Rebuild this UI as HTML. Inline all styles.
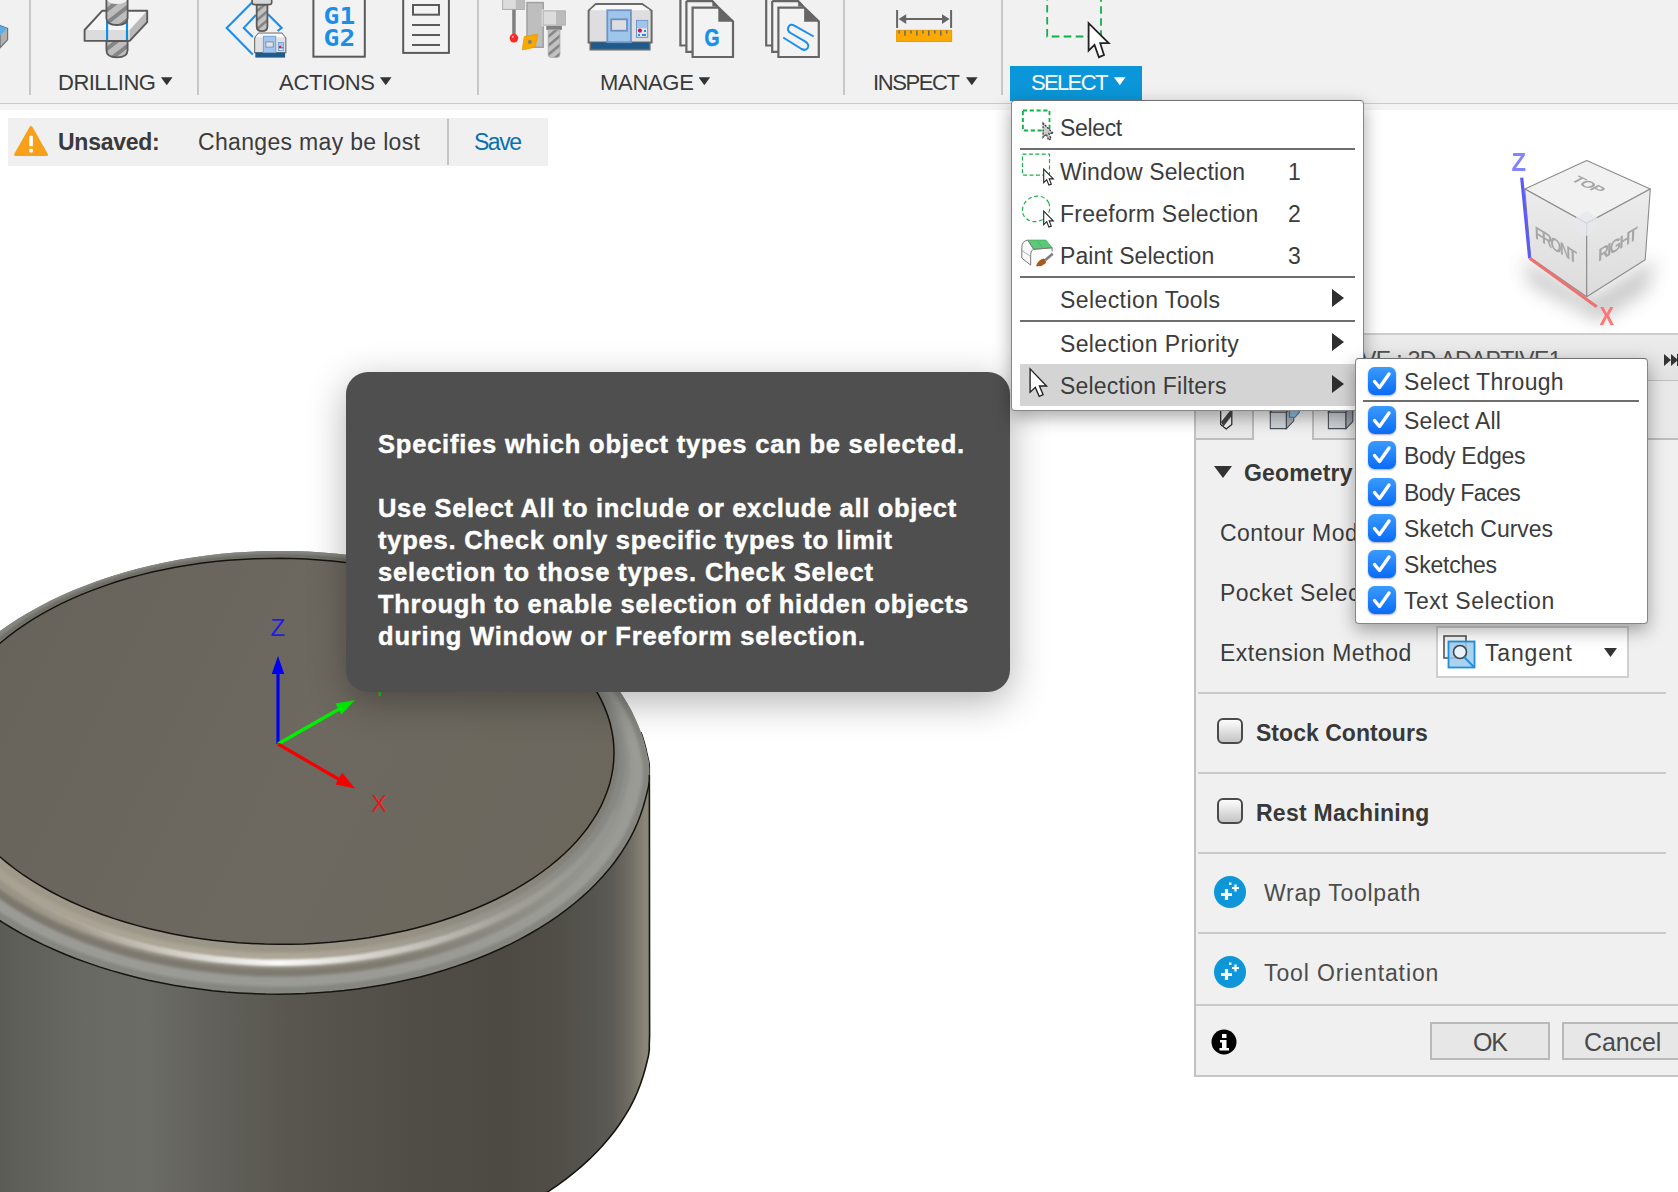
<!DOCTYPE html>
<html lang="en">
<head>
<meta charset="utf-8">
<title>Fusion 360 - Selection Filters</title>
<style>
html,body{margin:0;padding:0;}
body{width:1678px;height:1192px;overflow:hidden;background:#fff;position:relative;font-family:"Liberation Sans","DejaVu Sans",sans-serif;color:#3c3c3c;}
.abs{position:absolute;}
#canvas{left:0;top:0;width:1678px;height:1192px;}
/* toolbar */
#toolbar{left:0;top:0;width:1678px;height:103px;background:#f1f1f1;border-bottom:1px solid #c9c9c9;}
#tbshadow{left:0;top:104px;width:1678px;height:6px;background:#f3f3f3;}
.tsep{position:absolute;top:0;width:2px;height:95px;background:#c8c8c8;}
.tlabel{position:absolute;top:69.3px;height:28px;line-height:28px;font-size:22px;color:#3a3a3a;white-space:nowrap;}
.tlabel i{display:inline-block;width:11.6px;height:8px;background:#333;clip-path:polygon(0 0,100% 0,50% 100%);margin-left:5px;position:relative;top:-5px;}
#selbtn{left:1010px;top:66px;width:132px;height:35px;background:#0a96d8;}
/* unsaved bar */
#unsaved{left:8px;top:118px;width:540px;height:48px;background:#f0f0f0;}
#unsaved .sep{position:absolute;left:439px;top:1px;width:2px;height:46px;background:#c4c4c4;}
#unsaved span{position:absolute;top:0;line-height:48px;font-size:23px;white-space:nowrap;}
/* menus */
.menu{position:absolute;background:#fff;border:1.5px solid #868686;border-top-color:#707070;border-radius:4px;box-shadow:0 6px 18px rgba(0,0,0,.35);box-sizing:border-box;}
.mi{position:absolute;left:8px;right:8px;height:42px;line-height:42px;font-size:23px;color:#3c3c3c;white-space:nowrap;}
.mi span.t{position:absolute;left:40px;top:1px;}
.mi span.k{position:absolute;left:268px;top:1px;}
.mi .arr{position:absolute;right:11px;top:11px;width:0;height:0;border-top:9.5px solid transparent;border-bottom:9.5px solid transparent;border-left:12px solid #2e2e2e;}
.msep{position:absolute;left:8px;right:8px;height:2px;background:#6e6e6e;}
/* tooltip */
#tip{left:346px;top:372px;width:664px;height:320px;background:#4f4f4f;border-radius:22px;box-shadow:0 10px 38px rgba(0,0,0,.30);color:#fff;font-weight:bold;font-size:25.5px;line-height:32px;-webkit-text-stroke:0.45px #fff;}
#tip p{position:absolute;left:32px;margin:0;white-space:nowrap;}
/* panel */
#panel{left:1194px;top:333px;width:490px;height:744px;background:#f0f0f0;border-left:2px solid #c2c2c2;border-bottom:2px solid #c6c6c6;box-sizing:border-box;}
.prow{position:absolute;margin-top:1px;font-size:23px;color:#3c3c3c;white-space:nowrap;line-height:30px;}
.pline{position:absolute;left:4px;width:468px;height:2px;background:#c9c9c9;}
.cb{width:26px;height:26px;box-sizing:border-box;border:2px solid #4a4a4a;border-radius:6px;background:linear-gradient(#fdfdfd,#c4c4c4);}
.btn{background:#e7e7e7;border:2px solid #b9b9b9;box-sizing:border-box;}
.btn span{position:absolute;top:0;line-height:36px;font-size:25px;color:#4a4a4a;white-space:nowrap;}
.ck{position:absolute;left:12px;width:28px;height:28px;border-radius:6.5px;background:linear-gradient(#3a9bff,#0a6bf5);box-shadow:0 1px 2px rgba(0,0,80,.35);}
.ck svg{position:absolute;left:0;top:0;}
.st{position:absolute;left:48px;margin-top:1.2px;font-size:23px;line-height:30px;color:#3c3c3c;white-space:nowrap;}
</style>
<style id="fit">
#l1{letter-spacing:-0.505px}
#l2{letter-spacing:-0.292px}
#l3{letter-spacing:-0.302px}
#l4{letter-spacing:-1.409px}
#l5{letter-spacing:-1.653px}
#u1{letter-spacing:-0.260px}
#u2{letter-spacing:0.326px}
#u3{letter-spacing:-1.468px}
#t1{letter-spacing:0.791px}
#t2{letter-spacing:0.667px}
#t3{letter-spacing:0.772px}
#t4{letter-spacing:0.855px}
#t5{letter-spacing:0.726px}
#t6{letter-spacing:0.808px}
#mt1{letter-spacing:-0.334px}
#mt2{letter-spacing:0.141px}
#mt3{letter-spacing:0.239px}
#mt4{letter-spacing:0.059px}
#mt5{letter-spacing:0.414px}
#mt6{letter-spacing:0.367px}
#mt7{letter-spacing:0.186px}
#s1{letter-spacing:0.313px}
#s2{letter-spacing:0.262px}
#s3{letter-spacing:-0.288px}
#s4{letter-spacing:-0.511px}
#s5{letter-spacing:-0.053px}
#s6{letter-spacing:-0.215px}
#s7{letter-spacing:0.541px}
#p_geo{letter-spacing:0.150px}
#p_em{letter-spacing:0.476px}
#p_tan{letter-spacing:0.822px}
#p_sc{letter-spacing:0.034px}
#p_rm{letter-spacing:0.262px}
#p_wt{letter-spacing:0.730px}
#p_to{letter-spacing:0.884px}
#p_ok{letter-spacing:-1.283px}
#p_ca{letter-spacing:-0.096px}
#pt1{letter-spacing:-0.659px}
#p_cm,#p_ps{letter-spacing:0.476px}
#pt0{letter-spacing:-0.659px}
.mi span.k{letter-spacing:0}
</style>
</head>
<body>
<!-- 3D canvas -->
<svg id="canvas" class="abs" width="1678" height="1192" viewBox="0 0 1678 1192">
<!--CYL-->
<defs>
<linearGradient id="gw" gradientUnits="userSpaceOnUse" x1="0" y1="0" x2="650" y2="0">
<stop offset="0" stop-color="#5c5c57"/><stop offset=".128" stop-color="#696963"/><stop offset=".225" stop-color="#6c6c66"/><stop offset=".32" stop-color="#62615b"/><stop offset=".45" stop-color="#58564f"/><stop offset=".64" stop-color="#504d46"/><stop offset=".78" stop-color="#4d4a43"/><stop offset=".86" stop-color="#504e47"/><stop offset=".91" stop-color="#555550"/><stop offset=".94" stop-color="#5c5a54"/><stop offset=".966" stop-color="#6c6a62"/><stop offset=".993" stop-color="#8a8678"/><stop offset="1" stop-color="#8a8678"/>
</linearGradient>
<linearGradient id="gt" gradientUnits="userSpaceOnUse" x1="0" y1="600" x2="620" y2="900">
<stop offset="0" stop-color="#67635a"/><stop offset=".5" stop-color="#6e6960"/><stop offset="1" stop-color="#6b675d"/>
</linearGradient>
<linearGradient id="gh" gradientUnits="userSpaceOnUse" x1="0" y1="0" x2="650" y2="0">
<stop offset="0" stop-color="#fff" stop-opacity="0"/><stop offset=".12" stop-color="#fff" stop-opacity=".10"/><stop offset=".30" stop-color="#fff" stop-opacity=".6"/><stop offset=".43" stop-color="#fff" stop-opacity=".95"/><stop offset=".56" stop-color="#fff" stop-opacity=".6"/><stop offset=".78" stop-color="#fff" stop-opacity=".12"/><stop offset="1" stop-color="#fff" stop-opacity="0"/>
</linearGradient>
<linearGradient id="gf1" gradientUnits="userSpaceOnUse" x1="0" y1="0" x2="650" y2="0">
<stop offset="0" stop-color="#a8a293"/><stop offset=".45" stop-color="#aea797"/><stop offset=".8" stop-color="#92918a"/><stop offset="1" stop-color="#828480"/>
</linearGradient>
<linearGradient id="gb1" gradientUnits="userSpaceOnUse" x1="0" y1="0" x2="650" y2="0"><stop offset="0" stop-color="#9f998a"/><stop offset=".6" stop-color="#989284"/><stop offset=".85" stop-color="#858379"/><stop offset="1" stop-color="#7a7a72"/></linearGradient>
<linearGradient id="gb3" gradientUnits="userSpaceOnUse" x1="0" y1="0" x2="650" y2="0"><stop offset="0" stop-color="#999385"/><stop offset=".6" stop-color="#9a9486"/><stop offset=".85" stop-color="#94948c"/><stop offset="1" stop-color="#8c8e88"/></linearGradient>
<linearGradient id="gb4" gradientUnits="userSpaceOnUse" x1="0" y1="0" x2="650" y2="0"><stop offset="0" stop-color="#7c786e"/><stop offset=".6" stop-color="#7e7a70"/><stop offset=".85" stop-color="#90918b"/><stop offset="1" stop-color="#9a9c96"/></linearGradient>
<filter id="b2" x="-5%" y="-5%" width="110%" height="110%"><feGaussianBlur stdDeviation="1.6"/></filter>
<filter id="b1" x="-5%" y="-5%" width="110%" height="110%"><feGaussianBlur stdDeviation="0.9"/></filter>
<clipPath id="cf"><path d="M649.3,774.9 L649.3,781.5 L648.2,788.0 L646.4,794.6 L644.2,803.5 L641.4,812.5 L638.0,821.5 L634.1,830.3 L629.6,839.1 L624.5,847.7 L618.9,856.2 L612.8,864.5 L606.1,872.7 L598.9,880.7 L591.2,888.5 L583.0,896.1 L574.3,903.5 L565.2,910.6 L555.6,917.6 L545.5,924.3 L535.1,930.7 L524.2,936.9 L512.9,942.8 L501.3,948.4 L489.3,953.7 L477.0,958.8 L464.3,963.5 L451.4,967.9 L438.1,972.0 L424.6,975.7 L410.9,979.1 L397.0,982.2 L382.8,984.9 L368.5,987.3 L354.0,989.4 L339.4,991.0 L324.7,992.4 L309.9,993.3 L295.1,993.9 L280.2,994.2 L265.3,994.1 L250.4,993.6 L235.5,992.7 L220.7,991.5 L206.0,989.9 L191.4,988.0 L176.8,985.7 L162.5,983.1 L148.3,980.2 L134.2,976.8 L120.4,973.2 L106.9,969.2 L93.5,964.9 L80.5,960.3 L67.7,955.4 L55.3,950.1 L43.1,944.6 L31.4,938.8 L20.0,932.7 L9.0,926.4 L-1.7,919.8 L-11.8,912.9 L-21.6,905.8 L-30.9,898.5 L-39.8,890.9 L-48.1,883.2 L-56.0,875.3 L-63.4,867.1 L-70.2,858.9 L-76.6,850.4 L-82.4,841.9 L-87.6,833.1 L-92.3,824.3 L-96.5,815.4 L-100.1,806.4 L-103.1,797.3 L-105.5,788.2 L-107.2,779.3 L-105.4,775.4 L-103.1,771.5 L-100.3,767.6 L-96.9,763.8 L-93.1,760.0 L-88.7,756.2 L-86.6,747.5 L-84.0,738.5 L-80.9,729.6 L-77.3,720.7 L-73.1,712.0 L-68.3,703.4 L-63.0,694.8 L-57.2,686.5 L-50.8,678.3 L-44.0,670.2 L-36.7,662.3 L-28.8,654.6 L-20.5,647.1 L-11.7,639.8 L-2.5,632.7 L7.1,625.9 L17.2,619.3 L27.7,613.0 L38.6,606.9 L49.8,601.1 L61.4,595.6 L73.3,590.3 L85.6,585.4 L98.1,580.8 L110.9,576.4 L124.0,572.4 L137.4,568.8 L150.9,565.4 L164.6,562.4 L178.6,559.8 L192.6,557.4 L206.8,555.5 L221.2,553.8 L235.6,552.6 L250.0,551.7 L264.6,551.1 L279.1,550.9 L293.7,551.1 L308.2,551.6 L322.7,552.5 L337.1,553.7 L351.4,555.3 L365.6,557.2 L379.7,559.5 L393.6,562.1 L407.4,565.1 L420.9,568.4 L434.3,572.1 L447.4,576.0 L460.2,580.3 L472.7,584.9 L485.0,589.8 L496.9,595.0 L508.6,600.5 L519.8,606.3 L530.7,612.4 L541.2,618.7 L551.3,625.2 L560.9,632.1 L570.2,639.1 L579.0,646.4 L587.3,653.9 L595.2,661.5 L602.5,669.4 L609.4,677.4 L615.7,685.7 L621.6,694.0 L626.9,702.5 L631.7,711.1 L635.9,719.9 L639.6,728.7 L642.7,737.6 L645.3,746.6 L647.3,755.5 L648.8,761.9 L649.3,768.4 Z"/></clipPath>
</defs>
<path d="M-100.3,767.6 L-102.8,771.0 L-104.9,774.5 L-106.6,778.0 L-106.4,784.1 L-104.5,792.3 L-102.1,800.4 L-99.3,808.4 L-96.0,816.4 L-92.3,824.3 L-88.2,832.2 L-83.6,839.9 L-78.6,847.6 L-73.1,855.1 L-67.2,862.6 L-61.0,869.9 L-54.3,877.0 L-47.2,884.1 L-39.8,890.9 L-31.9,897.6 L-23.7,904.2 L-15.1,910.6 L-6.2,916.7 L3.0,922.7 L12.6,928.5 L22.5,934.1 L32.7,939.5 L43.1,944.6 L53.9,949.5 L64.9,954.2 L76.2,958.7 L87.7,962.9 L99.4,966.9 L111.4,970.6 L123.5,974.0 L135.8,977.2 L148.3,980.2 L160.9,982.8 L173.6,985.2 L186.5,987.3 L199.5,989.1 L212.5,990.7 L225.7,992.0 L238.8,992.9 L252.1,993.6 L265.3,994.1 L278.5,994.2 L291.8,994.0 L305.0,993.6 L318.2,992.8 L331.3,991.8 L344.3,990.5 L357.3,988.9 L370.1,987.1 L382.8,984.9 L395.4,982.5 L407.8,979.8 L420.1,976.9 L432.2,973.7 L444.0,970.2 L455.7,966.4 L467.1,962.5 L478.3,958.2 L489.3,953.7 L500.0,949.0 L510.4,944.1 L520.5,938.9 L530.3,933.5 L539.8,927.9 L548.9,922.1 L557.7,916.1 L566.2,909.9 L574.3,903.5 L582.1,896.9 L589.4,890.2 L596.4,883.3 L602.9,876.2 L609.1,869.1 L614.9,861.7 L620.2,854.3 L625.1,846.7 L629.6,839.1 L633.6,831.3 L637.2,823.5 L640.3,815.5 L643.0,807.5 L645.3,799.5 L647.1,792.4 L648.5,786.6 L649.3,780.7 L649.3,774.9 L649.2,804.9 L649.6,1035.9 L649.3,1043.9 L649.3,1049.7 L648.5,1055.6 L647.1,1061.4 L645.3,1068.5 L643.0,1076.5 L640.3,1084.5 L637.2,1092.5 L633.6,1100.3 L629.6,1108.1 L625.1,1115.7 L620.2,1123.3 L614.9,1130.7 L609.1,1138.1 L602.9,1145.2 L596.4,1152.3 L589.4,1159.2 L582.1,1165.9 L574.3,1172.5 L566.2,1178.9 L557.7,1185.1 L548.9,1191.1 L539.8,1196.9 L530.3,1202.5 L520.5,1207.9 L510.4,1213.1 L480.4,1230.0 L-120.0,1230.0 Z" fill="url(#gw)"/>
<path d="M640.9,732.2 L642.6,737.2 L644.1,742.2 L645.5,747.3 L646.6,752.4 L647.6,756.7 L648.5,760.3 L649.1,763.9 L649.3,767.6 L649.3,771.2 L649.3,774.9 L649.4,794.9 L649.6,1035.9 L649.3,1043.9 L649.3,1049.7 L648.5,1055.6 L647.1,1061.4 L645.3,1068.5 L643.0,1076.5 L640.3,1084.5 L637.2,1092.5 L633.6,1100.3 L629.6,1108.1 L625.1,1115.7 L620.2,1123.3 L614.9,1130.7 L609.1,1138.1 L602.9,1145.2 L596.4,1152.3 L589.4,1159.2 L582.1,1165.9 L574.3,1172.5 L566.2,1178.9 L557.7,1185.1 L548.9,1191.1 L539.8,1196.9 L530.3,1202.5 L520.5,1207.9 L510.4,1213.1" fill="none" stroke="#15140f" stroke-width="1.6"/>
<path d="M649.3,774.9 L649.3,781.5 L648.2,788.0 L646.4,794.6 L644.2,803.5 L641.4,812.5 L638.0,821.5 L634.1,830.3 L629.6,839.1 L624.5,847.7 L618.9,856.2 L612.8,864.5 L606.1,872.7 L598.9,880.7 L591.2,888.5 L583.0,896.1 L574.3,903.5 L565.2,910.6 L555.6,917.6 L545.5,924.3 L535.1,930.7 L524.2,936.9 L512.9,942.8 L501.3,948.4 L489.3,953.7 L477.0,958.8 L464.3,963.5 L451.4,967.9 L438.1,972.0 L424.6,975.7 L410.9,979.1 L397.0,982.2 L382.8,984.9 L368.5,987.3 L354.0,989.4 L339.4,991.0 L324.7,992.4 L309.9,993.3 L295.1,993.9 L280.2,994.2 L265.3,994.1 L250.4,993.6 L235.5,992.7 L220.7,991.5 L206.0,989.9 L191.4,988.0 L176.8,985.7 L162.5,983.1 L148.3,980.2 L134.2,976.8 L120.4,973.2 L106.9,969.2 L93.5,964.9 L80.5,960.3 L67.7,955.4 L55.3,950.1 L43.1,944.6 L31.4,938.8 L20.0,932.7 L9.0,926.4 L-1.7,919.8 L-11.8,912.9 L-21.6,905.8 L-30.9,898.5 L-39.8,890.9 L-48.1,883.2 L-56.0,875.3 L-63.4,867.1 L-70.2,858.9 L-76.6,850.4 L-82.4,841.9 L-87.6,833.1 L-92.3,824.3 L-96.5,815.4 L-100.1,806.4 L-103.1,797.3 L-105.5,788.2 L-107.2,779.3 L-105.4,775.4 L-103.1,771.5 L-100.3,767.6 L-96.9,763.8 L-93.1,760.0 L-88.7,756.2 L-86.6,747.5 L-84.0,738.5 L-80.9,729.6 L-77.3,720.7 L-73.1,712.0 L-68.3,703.4 L-63.0,694.8 L-57.2,686.5 L-50.8,678.3 L-44.0,670.2 L-36.7,662.3 L-28.8,654.6 L-20.5,647.1 L-11.7,639.8 L-2.5,632.7 L7.1,625.9 L17.2,619.3 L27.7,613.0 L38.6,606.9 L49.8,601.1 L61.4,595.6 L73.3,590.3 L85.6,585.4 L98.1,580.8 L110.9,576.4 L124.0,572.4 L137.4,568.8 L150.9,565.4 L164.6,562.4 L178.6,559.8 L192.6,557.4 L206.8,555.5 L221.2,553.8 L235.6,552.6 L250.0,551.7 L264.6,551.1 L279.1,550.9 L293.7,551.1 L308.2,551.6 L322.7,552.5 L337.1,553.7 L351.4,555.3 L365.6,557.2 L379.7,559.5 L393.6,562.1 L407.4,565.1 L420.9,568.4 L434.3,572.1 L447.4,576.0 L460.2,580.3 L472.7,584.9 L485.0,589.8 L496.9,595.0 L508.6,600.5 L519.8,606.3 L530.7,612.4 L541.2,618.7 L551.3,625.2 L560.9,632.1 L570.2,639.1 L579.0,646.4 L587.3,653.9 L595.2,661.5 L602.5,669.4 L609.4,677.4 L615.7,685.7 L621.6,694.0 L626.9,702.5 L631.7,711.1 L635.9,719.9 L639.6,728.7 L642.7,737.6 L645.3,746.6 L647.3,755.5 L648.8,761.9 L649.3,768.4 Z" fill="#8d8a80"/>
<g clip-path="url(#cf)"><g filter="url(#b2)">
<path d="M617.5,755.7 L617.2,763.1 L616.4,770.6 L615.0,778.0 L613.1,785.7 L610.7,793.3 L607.8,800.8 L604.4,808.3 L600.4,815.7 L596.0,822.9 L591.1,830.1 L585.7,837.2 L579.8,844.1 L573.5,850.9 L566.7,857.5 L559.4,863.9 L551.8,870.2 L543.7,876.3 L535.2,882.3 L526.3,888.0 L517.0,893.5 L507.3,898.8 L497.3,903.8 L487.0,908.7 L476.3,913.2 L465.3,917.6 L454.1,921.7 L442.5,925.5 L430.8,929.0 L418.7,932.3 L406.5,935.3 L394.1,938.0 L381.5,940.5 L368.7,942.6 L355.8,944.5 L342.7,946.0 L329.6,947.3 L316.4,948.2 L303.1,948.9 L289.8,949.2 L276.5,949.3 L263.2,949.0 L249.9,948.4 L236.6,947.6 L223.4,946.4 L210.3,944.9 L197.3,943.2 L184.4,941.1 L171.7,938.8 L159.1,936.1 L146.7,933.2 L134.5,930.0 L122.6,926.5 L110.8,922.8 L99.4,918.8 L88.2,914.5 L77.3,910.0 L66.7,905.2 L56.4,900.2 L46.5,895.0 L36.9,889.6 L27.7,883.9 L18.9,878.0 L10.5,872.0 L2.5,865.7 L-5.0,859.3 L-12.2,852.7 L-18.9,846.0 L-25.1,839.1 L-30.8,832.1 L-36.1,825.0 L-40.9,817.7 L-45.2,810.4 L-49.0,802.9 L-52.3,795.4 L-55.1,787.8 L-57.4,780.2 L-59.2,772.5 L-60.1,765.3 L-60.5,758.1 L-60.4,750.9 L-59.8,743.7 L-58.7,736.5 L-57.0,729.4 L-55.2,721.8 L-52.8,714.2 L-49.9,706.6 L-46.5,699.2 L-42.6,691.8 L-38.2,684.5 L-33.3,677.3 L-27.9,670.3 L-22.1,663.4 L-15.8,656.6 L-9.0,649.9 L-1.8,643.5 L5.8,637.2 L13.9,631.0 L22.3,625.1 L31.2,619.4 L40.4,613.9 L50.1,608.6 L60.0,603.5 L70.3,598.6 L81.0,594.0 L91.9,589.7 L103.1,585.6 L114.6,581.7 L126.3,578.1 L138.3,574.8 L150.5,571.8 L162.9,569.1 L175.5,566.6 L188.2,564.4 L201.1,562.5 L214.1,561.0 L227.2,559.7 L240.4,558.7 L253.6,558.0 L266.9,557.6 L280.2,557.6 L293.5,557.8 L306.7,558.3 L319.9,559.2 L333.1,560.3 L346.2,561.7 L359.2,563.5 L372.0,565.5 L384.7,567.8 L397.3,570.4 L409.6,573.3 L421.8,576.5 L433.7,579.9 L445.4,583.6 L456.9,587.6 L468.1,591.8 L478.9,596.3 L489.5,601.1 L499.8,606.0 L509.7,611.2 L519.2,616.6 L528.4,622.3 L537.2,628.1 L545.6,634.1 L553.6,640.3 L561.2,646.7 L568.3,653.3 L575.0,660.0 L581.2,666.8 L587.0,673.8 L592.2,680.9 L597.0,688.2 L601.4,695.5 L605.2,702.9 L608.5,710.4 L611.3,718.0 L613.6,725.6 L615.4,733.3 L616.6,740.7 L617.3,748.2 Z" fill="none" stroke="url(#gb1)" stroke-width="12" stroke-opacity="1"/>
<path d="M623.5,759.3 L623.3,766.6 L622.4,773.9 L620.9,781.2 L619.0,789.0 L616.5,796.9 L613.5,804.7 L610.0,812.4 L605.9,820.1 L601.4,827.6 L596.3,835.0 L590.8,842.3 L584.8,849.5 L578.3,856.5 L571.3,863.3 L563.9,870.0 L556.0,876.5 L547.7,882.8 L539.0,888.9 L529.9,894.8 L520.4,900.5 L510.5,906.0 L500.3,911.2 L489.7,916.2 L478.8,920.9 L467.5,925.4 L456.0,929.6 L444.2,933.5 L432.2,937.1 L419.9,940.5 L407.3,943.6 L394.6,946.4 L381.7,948.9 L368.6,951.1 L355.4,953.0 L342.1,954.5 L328.7,955.8 L315.2,956.8 L301.6,957.4 L288.0,957.7 L274.4,957.7 L260.7,957.4 L247.1,956.8 L233.6,955.9 L220.1,954.6 L206.7,953.1 L193.4,951.2 L180.3,949.1 L167.2,946.6 L154.4,943.8 L141.7,940.8 L129.3,937.4 L117.1,933.8 L105.1,929.9 L93.4,925.7 L82.0,921.2 L70.8,916.5 L60.0,911.6 L49.5,906.4 L39.4,900.9 L29.6,895.3 L20.3,889.4 L11.3,883.3 L2.7,877.0 L-5.5,870.5 L-13.2,863.8 L-20.4,857.0 L-27.3,850.0 L-33.6,842.9 L-39.5,835.6 L-44.9,828.2 L-49.7,820.6 L-54.1,813.0 L-58.0,805.3 L-61.4,797.5 L-64.2,789.6 L-66.5,781.7 L-68.2,773.8 L-68.6,767.2 L-68.6,760.7 L-67.9,754.1 L-66.8,747.5 L-65.2,741.0 L-63.0,734.4 L-61.1,726.6 L-58.7,718.8 L-55.8,711.0 L-52.3,703.2 L-48.3,695.6 L-43.9,688.1 L-38.9,680.6 L-33.5,673.3 L-27.5,666.2 L-21.1,659.1 L-14.2,652.3 L-6.9,645.6 L0.8,639.0 L9.0,632.7 L17.6,626.6 L26.7,620.6 L36.1,614.9 L45.8,609.4 L56.0,604.1 L66.5,599.1 L77.3,594.3 L88.4,589.8 L99.8,585.5 L111.5,581.5 L123.4,577.8 L135.6,574.4 L148.0,571.2 L160.6,568.4 L173.4,565.8 L186.4,563.5 L199.5,561.6 L212.7,559.9 L226.1,558.6 L239.5,557.5 L252.9,556.8 L266.4,556.4 L280.0,556.3 L293.5,556.5 L307.0,557.1 L320.5,557.9 L333.9,559.0 L347.2,560.5 L360.4,562.3 L373.5,564.4 L386.4,566.7 L399.2,569.4 L411.8,572.4 L424.1,575.6 L436.3,579.2 L448.2,583.0 L459.9,587.1 L471.3,591.5 L482.3,596.1 L493.1,601.0 L503.5,606.1 L513.6,611.4 L523.4,617.0 L532.7,622.8 L541.7,628.8 L550.2,635.1 L558.4,641.5 L566.1,648.1 L573.4,654.8 L580.2,661.8 L586.5,668.8 L592.4,676.1 L597.8,683.4 L602.7,690.9 L607.1,698.5 L611.0,706.1 L614.4,713.9 L617.2,721.7 L619.6,729.6 L621.4,737.5 L622.7,744.7 L623.4,752.0 Z" fill="none" stroke="url(#gf1)" stroke-width="10" stroke-opacity="1"/>
<path d="M628.8,762.5 L628.6,769.6 L627.7,776.8 L626.2,783.9 L624.2,792.0 L621.6,800.1 L618.5,808.2 L614.9,816.1 L610.8,824.0 L606.1,831.7 L601.0,839.4 L595.3,846.9 L589.2,854.2 L582.5,861.5 L575.4,868.5 L567.8,875.4 L559.8,882.0 L551.3,888.5 L542.4,894.8 L533.1,900.9 L523.4,906.7 L513.3,912.3 L502.9,917.7 L492.1,922.8 L480.9,927.6 L469.5,932.2 L457.7,936.5 L445.7,940.6 L433.4,944.3 L420.8,947.7 L408.1,950.9 L395.1,953.7 L381.9,956.3 L368.6,958.5 L355.1,960.4 L341.6,962.0 L327.9,963.3 L314.1,964.3 L300.3,964.9 L286.4,965.2 L272.5,965.2 L258.6,964.9 L244.8,964.2 L231.0,963.2 L217.2,961.9 L203.6,960.3 L190.0,958.3 L176.6,956.1 L163.3,953.5 L150.3,950.6 L137.4,947.4 L124.7,943.9 L112.2,940.2 L100.0,936.1 L88.1,931.8 L76.5,927.2 L65.1,922.3 L54.1,917.2 L43.5,911.8 L33.1,906.2 L23.2,900.3 L13.7,894.2 L4.5,887.9 L-4.2,881.4 L-12.5,874.7 L-20.4,867.8 L-27.8,860.7 L-34.7,853.5 L-41.1,846.1 L-47.1,838.6 L-52.6,831.0 L-57.5,823.2 L-62.0,815.3 L-65.9,807.4 L-69.3,799.3 L-72.2,791.2 L-74.5,783.0 L-76.2,775.0 L-76.2,768.9 L-75.7,762.9 L-74.6,756.9 L-73.0,750.9 L-70.9,744.9 L-68.3,738.9 L-66.3,730.9 L-63.9,722.8 L-60.9,714.8 L-57.4,706.8 L-53.4,699.0 L-48.9,691.2 L-43.9,683.6 L-38.3,676.0 L-32.3,668.7 L-25.8,661.4 L-18.9,654.3 L-11.4,647.4 L-3.5,640.7 L4.8,634.2 L13.5,627.8 L22.6,621.7 L32.2,615.8 L42.1,610.1 L52.4,604.7 L63.0,599.5 L74.0,594.6 L85.3,589.9 L96.9,585.5 L108.7,581.4 L120.9,577.5 L133.2,574.0 L145.8,570.7 L158.6,567.8 L171.6,565.1 L184.8,562.8 L198.1,560.7 L211.5,559.0 L225.0,557.6 L238.7,556.5 L252.3,555.8 L266.1,555.3 L279.8,555.2 L293.5,555.4 L307.2,555.9 L320.9,556.8 L334.5,557.9 L348.0,559.4 L361.5,561.2 L374.7,563.4 L387.9,565.8 L400.9,568.5 L413.6,571.6 L426.2,574.9 L438.6,578.5 L450.7,582.5 L462.5,586.7 L474.1,591.1 L485.3,595.9 L496.3,600.9 L506.9,606.1 L517.1,611.6 L527.0,617.4 L536.5,623.3 L545.6,629.5 L554.3,635.9 L562.6,642.5 L570.5,649.3 L577.8,656.2 L584.8,663.3 L591.2,670.6 L597.2,678.0 L602.7,685.6 L607.7,693.3 L612.1,701.1 L616.1,708.9 L619.6,716.9 L622.5,725.0 L624.9,733.1 L626.7,741.2 L628.1,748.2 L628.7,755.4 Z" fill="none" stroke="url(#gb3)" stroke-width="8" stroke-opacity="1"/>
<path d="M634.5,765.9 L634.3,772.9 L633.4,779.9 L631.8,786.9 L629.7,795.2 L627.1,803.5 L623.9,811.8 L620.2,820.0 L616.0,828.1 L611.2,836.1 L605.9,844.0 L600.1,851.7 L593.8,859.3 L587.0,866.8 L579.8,874.0 L572.0,881.1 L563.8,888.0 L555.1,894.6 L546.1,901.1 L536.5,907.3 L526.6,913.3 L516.3,919.1 L505.6,924.6 L494.6,929.9 L483.2,934.8 L471.5,939.5 L459.5,944.0 L447.2,948.1 L434.7,951.9 L421.9,955.5 L408.8,958.7 L395.6,961.6 L382.2,964.2 L368.6,966.5 L354.8,968.4 L341.0,970.0 L327.0,971.3 L313.0,972.3 L298.8,972.9 L284.7,973.2 L270.5,973.2 L256.4,972.8 L242.2,972.1 L228.1,971.0 L214.1,969.6 L200.2,967.9 L186.4,965.9 L172.7,963.5 L159.2,960.8 L145.8,957.8 L132.7,954.5 L119.8,950.9 L107.1,947.0 L94.6,942.8 L82.5,938.3 L70.6,933.5 L59.1,928.5 L47.8,923.1 L37.0,917.6 L26.5,911.7 L16.4,905.7 L6.6,899.4 L-2.7,892.8 L-11.6,886.1 L-20.0,879.2 L-28.0,872.1 L-35.5,864.7 L-42.6,857.3 L-49.2,849.7 L-55.2,841.9 L-60.8,834.0 L-65.8,826.0 L-70.3,817.8 L-74.3,809.6 L-77.8,801.3 L-80.7,792.9 L-83.1,784.5 L-84.8,776.2 L-84.3,770.7 L-83.2,765.3 L-81.7,759.8 L-79.6,754.4 L-77.0,749.0 L-74.0,743.7 L-71.9,735.5 L-69.4,727.1 L-66.4,718.9 L-62.9,710.7 L-58.8,702.6 L-54.2,694.6 L-49.1,686.7 L-43.5,678.9 L-37.4,671.3 L-30.8,663.8 L-23.8,656.5 L-16.2,649.4 L-8.2,642.5 L0.2,635.7 L9.1,629.2 L18.4,622.9 L28.1,616.8 L38.1,610.9 L48.6,605.3 L59.4,599.9 L70.5,594.9 L82.0,590.0 L93.8,585.5 L105.8,581.2 L118.1,577.2 L130.7,573.6 L143.5,570.2 L156.5,567.1 L169.7,564.4 L183.1,561.9 L196.6,559.8 L210.2,558.0 L224.0,556.6 L237.8,555.4 L251.7,554.6 L265.6,554.2 L279.6,554.0 L293.6,554.2 L307.5,554.7 L321.4,555.6 L335.2,556.8 L349.0,558.3 L362.6,560.1 L376.1,562.3 L389.5,564.8 L402.7,567.6 L415.7,570.7 L428.4,574.1 L441.0,577.8 L453.3,581.9 L465.3,586.2 L477.1,590.8 L488.5,595.6 L499.7,600.8 L510.5,606.2 L520.9,611.8 L530.9,617.7 L540.6,623.9 L549.9,630.2 L558.7,636.8 L567.1,643.6 L575.1,650.5 L582.6,657.7 L589.7,665.0 L596.2,672.5 L602.3,680.1 L607.9,687.9 L613.0,695.8 L617.5,703.8 L621.6,712.0 L625.1,720.2 L628.1,728.5 L630.5,736.8 L632.4,745.1 L633.8,752.0 L634.4,759.0 Z" fill="none" stroke="url(#gb4)" stroke-width="9" stroke-opacity="1"/>
<path d="M640.8,769.8 L640.8,776.6 L639.7,783.4 L638.1,790.2 L635.9,798.8 L633.2,807.4 L630.0,816.0 L626.1,824.5 L621.8,832.8 L616.9,841.1 L611.5,849.2 L605.5,857.2 L599.1,865.0 L592.1,872.7 L584.7,880.2 L576.7,887.5 L568.3,894.6 L559.4,901.5 L550.1,908.2 L540.4,914.6 L530.2,920.8 L519.7,926.7 L508.8,932.4 L497.5,937.8 L485.8,942.9 L473.9,947.8 L461.6,952.3 L449.0,956.6 L436.2,960.5 L423.1,964.1 L409.7,967.5 L396.2,970.4 L382.5,973.1 L368.5,975.4 L354.5,977.4 L340.3,979.0 L326.0,980.3 L311.7,981.3 L297.2,981.9 L282.8,982.2 L268.3,982.1 L253.8,981.7 L239.4,980.9 L225.0,979.8 L210.6,978.3 L196.4,976.5 L182.3,974.4 L168.3,971.9 L154.5,969.1 L140.9,966.0 L127.4,962.5 L114.2,958.8 L101.3,954.7 L88.6,950.3 L76.1,945.6 L64.0,940.6 L52.2,935.4 L40.8,929.9 L29.7,924.1 L19.0,918.0 L8.6,911.7 L-1.3,905.2 L-10.8,898.4 L-19.9,891.4 L-28.5,884.2 L-36.6,876.8 L-44.3,869.3 L-51.5,861.5 L-58.2,853.6 L-64.4,845.5 L-70.0,837.4 L-75.2,829.0 L-79.8,820.6 L-83.8,812.1 L-87.3,803.5 L-90.3,794.8 L-92.7,786.1 L-94.4,777.5 L-93.3,772.7 L-91.7,767.9 L-89.6,763.2 L-87.0,758.4 L-83.9,753.7 L-80.3,749.0 L-78.2,740.6 L-75.7,732.0 L-72.7,723.4 L-69.1,715.0 L-64.9,706.6 L-60.3,698.3 L-55.1,690.2 L-49.4,682.2 L-43.2,674.3 L-36.5,666.6 L-29.3,659.0 L-21.6,651.6 L-13.5,644.5 L-4.9,637.5 L4.1,630.7 L13.6,624.2 L23.4,617.9 L33.7,611.8 L44.3,606.0 L55.3,600.4 L66.6,595.2 L78.3,590.2 L90.2,585.4 L102.5,581.0 L115.1,576.9 L127.8,573.1 L140.9,569.6 L154.1,566.4 L167.5,563.5 L181.1,561.0 L194.9,558.8 L208.8,556.9 L222.8,555.4 L236.8,554.2 L251.0,553.3 L265.2,552.8 L279.4,552.7 L293.6,552.9 L307.8,553.4 L321.9,554.2 L336.0,555.5 L350.0,557.0 L363.9,558.9 L377.6,561.1 L391.2,563.7 L404.7,566.5 L417.9,569.7 L430.9,573.2 L443.7,577.1 L456.3,581.2 L468.5,585.6 L480.5,590.4 L492.1,595.4 L503.5,600.7 L514.5,606.2 L525.1,612.1 L535.3,618.1 L545.2,624.4 L554.6,631.0 L563.6,637.8 L572.2,644.8 L580.3,652.0 L588.0,659.3 L595.2,666.9 L601.9,674.6 L608.1,682.5 L613.8,690.5 L618.9,698.7 L623.6,707.0 L627.7,715.3 L631.3,723.8 L634.3,732.4 L636.8,741.0 L638.8,749.5 L640.2,756.2 L640.8,763.0 Z" fill="none" stroke="#9b9b96" stroke-width="11" stroke-opacity="1"/>
<path d="M646.8,773.4 L646.8,780.0 L645.7,786.7 L644.0,793.3 L641.8,802.1 L639.0,811.0 L635.7,819.9 L631.8,828.6 L627.3,837.3 L622.3,845.8 L616.7,854.1 L610.6,862.4 L604.0,870.4 L596.9,878.3 L589.3,886.1 L581.2,893.6 L572.6,900.9 L563.5,908.0 L554.0,914.8 L544.0,921.5 L533.7,927.8 L522.9,933.9 L511.7,939.8 L500.2,945.3 L488.3,950.6 L476.1,955.6 L463.5,960.2 L450.7,964.6 L437.6,968.6 L424.2,972.3 L410.6,975.7 L396.7,978.8 L382.7,981.5 L368.5,983.9 L354.2,985.9 L339.7,987.5 L325.1,988.9 L310.4,989.8 L295.7,990.4 L281.0,990.7 L266.2,990.6 L251.4,990.1 L236.7,989.3 L222.0,988.1 L207.3,986.6 L192.8,984.7 L178.4,982.4 L164.2,979.9 L150.1,976.9 L136.2,973.7 L122.5,970.1 L109.0,966.2 L95.8,961.9 L82.8,957.4 L70.2,952.5 L57.8,947.4 L45.8,941.9 L34.1,936.2 L22.8,930.2 L11.9,923.9 L1.3,917.4 L-8.8,910.6 L-18.5,903.6 L-27.7,896.4 L-36.5,889.0 L-44.8,881.3 L-52.6,873.5 L-59.9,865.5 L-66.7,857.3 L-73.0,849.0 L-78.8,840.5 L-84.0,831.9 L-88.7,823.2 L-92.8,814.4 L-96.3,805.6 L-99.3,796.6 L-101.8,787.6 L-103.4,778.8 L-101.9,774.6 L-99.8,770.4 L-97.2,766.3 L-94.0,762.2 L-90.4,758.1 L-86.3,754.1 L-84.1,745.5 L-81.6,736.6 L-78.5,727.8 L-74.9,719.0 L-70.7,710.4 L-66.0,701.9 L-60.7,693.5 L-54.9,685.2 L-48.6,677.1 L-41.8,669.1 L-34.5,661.3 L-26.7,653.7 L-18.5,646.3 L-9.7,639.1 L-0.6,632.2 L9.0,625.4 L19.0,618.9 L29.4,612.6 L40.2,606.6 L51.4,600.9 L62.9,595.4 L74.8,590.3 L86.9,585.4 L99.4,580.8 L112.1,576.6 L125.1,572.6 L138.4,569.0 L151.8,565.7 L165.5,562.7 L179.3,560.1 L193.3,557.8 L207.4,555.9 L221.6,554.3 L235.9,553.0 L250.3,552.1 L264.7,551.6 L279.2,551.4 L293.6,551.6 L308.1,552.1 L322.5,553.0 L336.8,554.2 L351.0,555.8 L365.1,557.7 L379.1,560.0 L392.9,562.6 L406.6,565.5 L420.0,568.8 L433.3,572.4 L446.3,576.3 L459.0,580.6 L471.5,585.1 L483.7,590.0 L495.5,595.1 L507.1,600.6 L518.2,606.3 L529.1,612.3 L539.5,618.5 L549.5,625.0 L559.1,631.8 L568.3,638.7 L577.0,645.9 L585.3,653.3 L593.1,660.9 L600.4,668.7 L607.2,676.6 L613.5,684.7 L619.3,693.0 L624.6,701.4 L629.3,709.9 L633.5,718.5 L637.2,727.3 L640.3,736.1 L642.8,745.0 L644.8,753.7 L646.3,760.2 L646.8,766.8 Z" fill="none" stroke="#868681" stroke-width="8" stroke-opacity="1"/>
</g><g filter="url(#b1)">
<path d="M615.5,810.2 L612.3,816.8 L608.8,823.3 L604.9,829.8 L600.7,836.1 L596.1,842.4 L591.2,848.6 L585.9,854.7 L580.3,860.6 L574.3,866.5 L568.0,872.2 L561.5,877.8 L554.5,883.3 L547.3,888.6 L539.8,893.8 L532.0,898.9 L524.0,903.7 L515.6,908.5 L507.0,913.0 L498.2,917.4 L489.1,921.6 L479.8,925.6 L470.2,929.4 L460.4,933.0 L450.5,936.5 L440.3,939.7 L430.0,942.8 L419.5,945.6 L408.8,948.2 L398.0,950.6 L387.1,952.8 L376.1,954.8 L364.9,956.6 L353.6,958.1 L342.3,959.5 L330.9,960.6 L319.4,961.5 L307.9,962.1 L296.3,962.5 L284.7,962.7 L273.1,962.7 L261.5,962.5 L250.0,962.0 L238.4,961.3 L226.9,960.3 L215.5,959.2 L204.1,957.8 L192.8,956.2 L181.5,954.4 L170.4,952.3 L159.4,950.1 L148.5,947.6 L137.8,944.9 L127.2,942.1 L116.8,939.0 L106.5,935.7 L96.5,932.2 L86.6,928.5 L76.9,924.6 L67.5,920.6 L58.2,916.3 L49.3,911.9 L40.5,907.3 L32.0,902.6 L23.8,897.7 L15.9,892.6 L8.2,887.4 L0.8,882.0 L-6.2,876.5 L-13.0,870.9 L-19.5,865.1 L-25.6,859.2 L-31.4,853.2 L-36.9,847.1 L-42.0,840.9 L-46.8,834.6 L-51.2,828.2 L-55.3,821.7 L-59.0,815.2 L-62.4,808.6 L-65.4,801.9" fill="none" stroke="url(#gh)" stroke-width="6.5"/>
<path d="M-67.6,746.4 L-66.1,741.0 L-64.2,735.5 L-62.5,729.0 L-60.6,722.2 L-58.3,715.6 L-55.6,709.0 L-52.6,702.4 L-49.1,695.9 L-45.4,689.5 L-41.2,683.1 L-36.7,676.9 L-31.9,670.7 L-26.7,664.6 L-21.2,658.7 L-15.3,652.8 L-9.1,647.1 L-2.6,641.5 L4.2,636.0 L11.3,630.7 L18.7,625.5 L26.5,620.5 L34.4,615.6 L42.7,610.9 L51.2,606.3 L60.0,601.9 L69.0,597.7 L78.2,593.7 L87.7,589.8 L97.4,586.2 L107.3,582.7 L117.3,579.5 L127.6,576.4 L138.0,573.5 L148.6,570.9 L159.3,568.5 L170.2,566.2 L181.1,564.2 L192.2,562.4 L203.4,560.9 L214.6,559.5 L226.0,558.4 L237.4,557.5 L248.8,556.8 L260.3,556.3 L271.8,556.1 L283.3,556.1 L294.7,556.3 L306.2,556.8 L317.7,557.5 L329.1,558.4 L340.4,559.5 L351.7,560.8 L362.9,562.4 L374.0,564.2 L385.0,566.2 L395.9,568.4 L406.7,570.9 L417.3,573.5 L427.7,576.4 L438.0,579.4 L448.2,582.7 L458.1,586.2 L467.8,589.8 L477.4,593.7 L486.7,597.7 L495.8,601.9 L504.6,606.3 L513.2,610.8 L521.5,615.6 L529.6,620.4 L537.4,625.5 L544.9,630.7 L552.1,636.0 L559.0,641.5 L565.6,647.1 L571.8,652.8 L577.8,658.6 L583.4,664.6 L588.7,670.7 L593.6,676.8" fill="none" stroke="#66665e" stroke-width="4.5" stroke-opacity=".85"/>
</g></g>
<path d="M649.3,774.9 L649.3,780.7 L648.5,786.6 L647.1,792.4 L645.3,799.5 L643.0,807.5 L640.3,815.5 L637.2,823.5 L633.6,831.3 L629.6,839.1 L625.1,846.7 L620.2,854.3 L614.9,861.7 L609.1,869.1 L602.9,876.2 L596.4,883.3 L589.4,890.2 L582.1,896.9 L574.3,903.5 L566.2,909.9 L557.7,916.1 L548.9,922.1 L539.8,927.9 L530.3,933.5 L520.5,938.9 L510.4,944.1 L500.0,949.0 L489.3,953.7 L478.3,958.2 L467.1,962.5 L455.7,966.4 L444.0,970.2 L432.2,973.7 L420.1,976.9 L407.8,979.8 L395.4,982.5 L382.8,984.9 L370.1,987.1 L357.3,988.9 L344.3,990.5 L331.3,991.8 L318.2,992.8 L305.0,993.6 L291.8,994.0 L278.5,994.2 L265.3,994.1 L252.1,993.6 L238.8,992.9 L225.7,992.0 L212.5,990.7 L199.5,989.1 L186.5,987.3 L173.6,985.2 L160.9,982.8 L148.3,980.2 L135.8,977.2 L123.5,974.0 L111.4,970.6 L99.4,966.9 L87.7,962.9 L76.2,958.7 L64.9,954.2 L53.9,949.5 L43.1,944.6 L32.7,939.5 L22.5,934.1 L12.6,928.5 L3.0,922.7 L-6.2,916.7 L-15.1,910.6 L-23.7,904.2 L-31.9,897.6 L-39.8,890.9 L-47.2,884.1 L-54.3,877.0 L-61.0,869.9 L-67.2,862.6 L-73.1,855.1 L-78.6,847.6 L-83.6,839.9 L-88.2,832.2 L-92.3,824.3 L-96.0,816.4 L-99.3,808.4 L-102.1,800.4 L-104.5,792.3 L-106.4,784.1 L-106.6,778.0 L-104.9,774.5 L-102.8,771.0 L-100.3,767.6" fill="none" stroke="#15140f" stroke-width="1.5"/>
<path d="M614.0,753.5 L613.7,761.1 L612.9,768.7 L611.5,776.2 L609.7,783.7 L607.3,791.1 L604.4,798.5 L601.1,805.8 L597.2,813.1 L592.8,820.2 L588.0,827.2 L582.7,834.1 L576.9,840.9 L570.7,847.5 L564.0,854.0 L556.8,860.4 L549.3,866.5 L541.3,872.5 L532.9,878.3 L524.1,883.9 L515.0,889.3 L505.5,894.5 L495.6,899.5 L485.4,904.2 L474.9,908.7 L464.0,913.0 L452.9,917.0 L441.6,920.8 L429.9,924.3 L418.1,927.5 L406.0,930.5 L393.7,933.1 L381.3,935.5 L368.7,937.7 L356.0,939.5 L343.1,941.0 L330.1,942.3 L317.1,943.2 L304.0,943.9 L290.9,944.2 L277.7,944.3 L264.6,944.1 L251.4,943.5 L238.4,942.7 L225.3,941.6 L212.4,940.2 L199.6,938.4 L186.8,936.4 L174.3,934.2 L161.9,931.6 L149.6,928.8 L137.6,925.6 L125.8,922.3 L114.2,918.6 L102.9,914.7 L91.8,910.5 L81.1,906.1 L70.6,901.5 L60.5,896.6 L50.7,891.5 L41.2,886.2 L32.1,880.7 L23.4,875.0 L15.1,869.0 L7.2,862.9 L-0.2,856.7 L-7.3,850.2 L-13.9,843.7 L-20.1,836.9 L-25.8,830.1 L-31.0,823.1 L-35.7,816.0 L-40.0,808.8 L-43.8,801.5 L-47.0,794.2 L-49.8,786.8 L-52.1,779.3 L-53.8,771.8 L-55.1,764.2 L-55.8,756.7 L-56.0,749.1 L-55.7,741.5 L-54.9,733.9 L-53.5,726.4 L-51.7,718.9 L-49.3,711.5 L-46.4,704.1 L-43.1,696.8 L-39.2,689.5 L-34.8,682.4 L-30.0,675.4 L-24.7,668.5 L-18.9,661.7 L-12.7,655.1 L-6.0,648.6 L1.2,642.2 L8.7,636.1 L16.7,630.1 L25.1,624.3 L33.9,618.7 L43.0,613.3 L52.5,608.1 L62.4,603.1 L72.6,598.4 L83.1,593.9 L94.0,589.6 L105.1,585.6 L116.4,581.8 L128.1,578.3 L139.9,575.1 L152.0,572.1 L164.3,569.5 L176.7,567.1 L189.3,564.9 L202.0,563.1 L214.9,561.6 L227.9,560.3 L240.9,559.4 L254.0,558.7 L267.1,558.4 L280.3,558.3 L293.4,558.5 L306.6,559.1 L319.6,559.9 L332.7,561.0 L345.6,562.4 L358.4,564.2 L371.2,566.2 L383.7,568.4 L396.1,571.0 L408.4,573.8 L420.4,577.0 L432.2,580.3 L443.8,584.0 L455.1,587.9 L466.2,592.1 L476.9,596.5 L487.4,601.1 L497.5,606.0 L507.3,611.1 L516.8,616.4 L525.9,621.9 L534.6,627.6 L542.9,633.6 L550.8,639.7 L558.2,645.9 L565.3,652.4 L571.9,658.9 L578.1,665.7 L583.8,672.5 L589.0,679.5 L593.7,686.6 L598.0,693.8 L601.8,701.1 L605.0,708.4 L607.8,715.8 L610.1,723.3 L611.8,730.8 L613.1,738.4 L613.8,745.9 Z" fill="url(#gt)" stroke="#14130f" stroke-width="1.5"/>
<g>
<path d="M278,744 L278,672" stroke="#0000f5" stroke-width="3.2"/><path d="M271.8,674 L278,656 L284.2,674 Z" fill="#0000f5"/>
<path d="M278,744 L340,708.5" stroke="#00f000" stroke-width="3.2"/><path d="M335.5,703.5 L355,700 L341.5,714.5 Z" fill="#00f000"/>
<path d="M278,744 L340,780" stroke="#f50000" stroke-width="3.2"/><path d="M342,772.5 L355,788.5 L335.5,784.5 Z" fill="#f50000"/>
<text x="270.5" y="636" font-family="Liberation Sans, sans-serif" font-size="24" fill="#2020e0">Z</text>
<text x="371" y="811.5" font-family="Liberation Sans, sans-serif" font-size="24" fill="#e81818">X</text>
<text x="372" y="696" font-family="Liberation Sans, sans-serif" font-size="24" fill="#10d010">Y</text>
</g>
<!--/CYL-->
</svg>

<!-- toolbar -->
<div id="toolbar" class="abs">
<div class="tsep" style="left:29px"></div>
<div class="tsep" style="left:197px"></div>
<div class="tsep" style="left:477px"></div>
<div class="tsep" style="left:843px"></div>
<div class="tsep" style="left:1001px"></div>
<div id="selbtn" class="abs"></div>
<div class="tlabel" id="L1" style="left:58px"><span id="l1">DRILLING</span><i style="margin-left:5.5px"></i></div>
<div class="tlabel" id="L2" style="left:279px"><span id="l2">ACTIONS</span><i style="margin-left:5.2px"></i></div>
<div class="tlabel" id="L3" style="left:600px"><span id="l3">MANAGE</span><i style="margin-left:5.0px"></i></div>
<div class="tlabel" id="L4" style="left:873px"><span id="l4">INSPECT</span><i style="margin-left:7.5px"></i></div>
<div class="tlabel" id="L5" style="left:1031px;color:#fff"><span id="l5">SELECT</span><i style="background:#fff;margin-left:7.3px"></i></div>
<svg class="abs" style="left:0;top:0" width="1140" height="66" viewBox="0 0 1140 66">
<defs>
<pattern id="fl" width="10" height="13" patternUnits="userSpaceOnUse" patternTransform="skewY(-38)"><rect width="10" height="13" fill="#bdbdbd"/><rect y="0" width="10" height="5" fill="#858585"/></pattern>
<pattern id="fl2" width="10" height="9" patternUnits="userSpaceOnUse" patternTransform="skewY(-40)"><rect width="10" height="9" fill="#c2c2c2"/><rect y="0" width="10" height="3.4" fill="#858585"/></pattern>
</defs>
<!-- partial cube at far left -->
<path d="M0,25.5 L7.6,28.3 L7.6,39.8 L0,47.8 Z" fill="#b0b0b0" stroke="#707070" stroke-width="1.2"/><path d="M0,25.7 L7,28.4 L0,35.2 Z" fill="#58aee8"/>
<!-- DRILLING icon -->
<g stroke-linejoin="round">
<path d="M102.1,10.8 H147.2 L129.7,30 H84.6 Z" fill="#f5f5f5"/>
<path d="M84.6,30 H129.7 V40.9 H84.6 Z" fill="#dcdcdc"/>
<path d="M129.7,30 L147.2,10.8 V22.1 L129.7,40.9 Z" fill="#bababa"/>
<path d="M106.4,41 V50 Q106.4,57.4 117,57.4 Q127.6,57.4 127.6,50 V41 Z" fill="url(#fl)" stroke="#5a5a5a" stroke-width="1.8"/>
<path d="M102.1,10.8 H147.2 V22.1 L129.7,40.9 H84.6 V30 Z" fill="none" stroke="#5a5a5a" stroke-width="1.9"/>
<path d="M107.1,21 V40 M127,21 V40" stroke="#0a8fe8" stroke-width="2.1"/>
<path d="M106.4,-2 V18 Q106.4,25 117,25 Q127.6,25 127.6,18 V-2 Z" fill="url(#fl)" stroke="#5a5a5a" stroke-width="1.8"/>
<ellipse cx="117" cy="0" rx="9.6" ry="4" fill="#f0f0f0"/>
</g>
<!-- ACTIONS: simulate w/ machine -->
<g fill="none" stroke="#1a8ff0" stroke-width="2.1">
<path d="M252.5,2.1 L226.7,27.9 L252.8,54.6"/>
<path d="M255.9,15 L243.8,27.9 L252.8,37.1"/>
<path d="M268,14.2 L281.7,27.9 L277.6,31"/>
</g>
<path d="M252.1,-2 H271.7 V2.5 Q271.7,4.6 269,4.6 H254.8 Q252.1,4.6 252.1,2.5 Z" fill="#d8d8d8" stroke="#5a5a5a" stroke-width="1.6"/>
<path d="M256.7,4.8 H267.4 V26.5 Q267.4,31.2 262,31.2 Q256.7,31.2 256.7,26.5 Z" fill="url(#fl2)" stroke="#5a5a5a" stroke-width="1.8"/>
<g>
<path d="M254.6,38 L258.6,33.2 H281.8 L285.8,38 V52.6 H254.6 Z" fill="#e2e2e4" stroke="#777" stroke-width="1.2"/>
<path d="M255.4,37.3 L258.8,33.8 H281.6 L285,37.3 Z" fill="#fafafa"/>
<rect x="255.3" y="52.6" width="29.8" height="5" fill="#1f5a8c"/>
<rect x="263.4" y="36.3" width="12.3" height="16.3" fill="#a2c6ec" stroke="#7a9fd0" stroke-width="1"/>
<rect x="265.8" y="41.9" width="7.5" height="5.2" fill="#e2e2e2" stroke="#7a93c4" stroke-width="1"/>
<rect x="278.4" y="42.5" width="5.2" height="8" fill="#a2c6ec" stroke="#7a9fd0" stroke-width=".9"/>
<rect x="279" y="46" width="2.2" height="2.2" fill="#e0145a"/><rect x="281.3" y="47" width="1.6" height="1.4" fill="#1a8ff0"/><rect x="279.6" y="48.9" width="3" height="1.1" fill="#fff"/>
</g>
<!-- G1G2 -->
<rect x="313.4" y="-3" width="51.4" height="59.7" fill="#f3f3f3" stroke="#5a5a5a" stroke-width="2"/>
<text x="323.6" y="23.9" font-family="DejaVu Sans Mono, Liberation Mono, monospace" font-weight="bold" font-size="23" fill="#1a8fe8" textLength="31.6" lengthAdjust="spacingAndGlyphs">G1</text>
<text x="323.6" y="45.8" font-family="DejaVu Sans Mono, Liberation Mono, monospace" font-weight="bold" font-size="23" fill="#1a8fe8" textLength="31.6" lengthAdjust="spacingAndGlyphs">G2</text>
<!-- setup sheet -->
<rect x="403.2" y="-3" width="45.7" height="55.9" fill="#f3f3f3" stroke="#5a5a5a" stroke-width="2"/>
<rect x="413" y="5" width="26" height="9.7" fill="none" stroke="#5a5a5a" stroke-width="2"/>
<path d="M412,25 H440 M412,35 H440 M412,45 H440" stroke="#5a5a5a" stroke-width="2"/>
<!-- MANAGE: tool library -->
<rect x="502.6" y="-2" width="22" height="11.5" fill="#bcbcbc" stroke="#b2b2b2" stroke-width="1"/><rect x="503.2" y="-2" width="12.6" height="10.8" fill="#dcdcdc"/>
<rect x="512.2" y="9.7" width="3.5" height="25" fill="#808080"/>
<circle cx="513.9" cy="38.1" r="4.3" fill="#ff2828"/><circle cx="512.9" cy="36.7" r="1" fill="#ffb0b0"/>
<rect x="527" y="2.6" width="16.2" height="44.6" fill="#bebebe" stroke="#a2a2a2" stroke-width="1.6"/>
<path d="M524.3,36.5 L537.9,34.2 L535,47.2 L522.2,49.9 Z" fill="#f9a800" stroke="#e89b00" stroke-width=".8"/><circle cx="529.9" cy="42" r="2" fill="#808080"/>
<rect x="542.4" y="10.2" width="23.6" height="15.5" fill="#bcbcbc" stroke="#f6f6f6" stroke-width="1.2"/><rect x="543.4" y="11.2" width="12.6" height="13.6" fill="#dcdcdc"/><rect x="543" y="10.8" width="22.4" height="14.4" fill="none" stroke="#b0b0b0" stroke-width="1"/>
<rect x="546.3" y="25.9" width="15.6" height="4" fill="#808080"/>
<path d="M548.2,29.8 H559.9 V54.4 Q559.9,57.4 557,57.4 H551.1 Q548.2,57.4 548.2,54.4 Z" fill="url(#fl2)" stroke="#aaa" stroke-width=".8"/>
<!-- MANAGE: machine library -->
<path d="M588.6,42.4 V10.7 L595.8,3.9 H642.2 L651.6,10.7 V42.4 Z" fill="#dedee0" stroke="#6a6a6a" stroke-width="2"/>
<path d="M590,10.3 L596.2,5 H641.8 L650.2,10.3 Z" fill="#f8f8f8"/>
<path d="M590.3,42.4 H649.8 V49.6 H590.3 Z" fill="#1f5a8c"/><path d="M590.3,42.4 V49.6 H649.8 V42.4" fill="none" stroke="#6a6a6a" stroke-width="1.6"/>
<rect x="607.3" y="10.2" width="23.6" height="32" fill="#9fc5ea" stroke="#6e94c8" stroke-width="1.8"/>
<rect x="611.2" y="19.3" width="15.8" height="11.4" fill="#dedede" stroke="#6e8fc4" stroke-width="1.8"/>
<rect x="636.5" y="20.4" width="11.2" height="17" fill="#e4e4e4" stroke="#6e94c8" stroke-width="1"/><rect x="637" y="20.9" width="10.2" height="7.2" fill="#9fc5ea"/>
<circle cx="639.9" cy="30.6" r="2.1" fill="#d0145a"/><rect x="644" y="30" width="2" height="2" fill="#1a8ff0"/><rect x="638" y="34" width="2" height="2" fill="#1a8ff0"/><rect x="642" y="34" width="4" height="2" fill="#1a8ff0"/>
<!-- MANAGE: post library -->
<g id="docs">
<path d="M680.4,-3 V45.5 H700" fill="#f3f3f3" stroke="#666" stroke-width="2.2"/>
<path d="M686.9,50.4 V1 H712.5 L716,4.5 V50.4 Z" fill="#f3f3f3" stroke="none"/>
<path d="M686.4,1 V51.9 H700 M686.4,1.2 H712.4 L718,7" fill="none" stroke="#666" stroke-width="2.2"/>
<path d="M692.6,7.6 H718.6 L733,21.5 V57 H692.6 Z" fill="#f3f3f3" stroke="#666" stroke-width="2.2"/>
<path d="M718.3,7 L733.6,21.8 H718.3 Z" fill="#666"/>
<path d="M712.4,0 L718,6.5 H712.4 Z" fill="#666"/>
</g>
<text x="704.5" y="45.6" font-family="Liberation Sans, sans-serif" font-weight="bold" font-size="24.5" fill="#1a8fe8" stroke="#1a8fe8" stroke-width=".6" textLength="15" lengthAdjust="spacingAndGlyphs">G</text>
<use href="#docs" x="85.8" y="0"/>
<path d="M813.7,36.5 L794.4,25.6 Q790.2,23.2 788.4,27.2 Q786.9,31 790.6,33 L804.6,41.2 Q810,44.5 807.7,48 Q805.5,51.2 801.5,49 L783.2,37.5" fill="none" stroke="#1a8ff0" stroke-width="2"/>
<!-- INSPECT: measure -->
<path d="M897.1,10.1 V27.9 M951.1,10.1 V27.9" stroke="#666" stroke-width="2"/>
<path d="M904,19.1 H944" stroke="#666" stroke-width="2"/>
<path d="M898.6,19.1 L906.2,14.2 V24 Z M949.6,19.1 L942,14.2 V24 Z" fill="#666"/>
<rect x="896.6" y="30.3" width="55" height="11.2" fill="#fba900" stroke="#e89b00" stroke-width="1"/>
<path d="M899.1,30.6 V33.5 M911,30.6 V33.5 M922.9,30.6 V33.5 M934.8,30.6 V33.5 M946.7,30.6 V33.5" stroke="#6a6a6a" stroke-width="1.5"/>
<path d="M905,30.6 V35.8 M916.9,30.6 V35.8 M928.8,30.6 V35.8 M940.8,30.6 V35.8" stroke="#6a6a6a" stroke-width="1.5"/>
<!-- SELECT -->
<path d="M1047.2,-4 V36.5 H1101 V-4" fill="none" stroke="#10b04a" stroke-width="1.8" stroke-dasharray="7.6 4.4" stroke-dashoffset="3"/>
<path d="M1088.6,23.1 V50.7 L1094.5,44.9 L1098.9,57.2 L1104,55 L1100.2,43.2 H1108.7 Z" fill="#fff" stroke="#222" stroke-width="1.8" stroke-linejoin="miter"/>
</svg>


</div>
<div id="tbshadow" class="abs"></div>

<!-- unsaved -->
<div id="unsaved" class="abs">
<svg class="abs" style="left:5px;top:7px" width="36" height="33" viewBox="0 0 36 34" preserveAspectRatio="none"><path d="M18 2.5 L33.5 30.5 H2.5 Z" fill="#f9a01b" stroke="#f9a01b" stroke-width="3" stroke-linejoin="round"/><rect x="16.3" y="11" width="3.6" height="11" rx="1" fill="#fff"/><rect x="16.3" y="24.5" width="3.6" height="3.8" rx="1" fill="#fff"/></svg>
<span id="u1" style="left:50px;font-weight:bold;color:#3a3a3a">Unsaved:</span>
<span id="u2" style="left:190px;color:#3c3c3c">Changes may be lost</span>
<div class="sep"></div>
<span id="u3" style="left:466px;color:#0a6fb0">Save</span>

</div>

<!-- viewcube -->
<svg class="abs" style="left:1440px;top:130px" width="238" height="204" viewBox="1440 130 238 204">
<defs><filter id="cb" x="-30%" y="-30%" width="160%" height="160%"><feGaussianBlur stdDeviation="9"/></filter>
<filter id="cb1" x="-10%" y="-10%" width="120%" height="120%"><feGaussianBlur stdDeviation="0.7"/></filter>
<linearGradient id="cgf" x1="0" y1="0" x2="0" y2="1"><stop offset="0" stop-color="#ececec"/><stop offset="1" stop-color="#dcdcdc"/></linearGradient>
</defs>
<path d="M1522,258 L1590,298 L1655,258 L1648,290 L1600,322 L1530,285 Z" fill="#555" opacity=".30" filter="url(#cb)"/>
<g filter="url(#cb1)">
<path d="M1524.8,189 L1586.7,160.5 L1650.3,189 L1586.7,223.2 Z" fill="#f1f1f1" stroke="#8c8c8c" stroke-width="1.1" stroke-linejoin="round"/>
<path d="M1524.8,189 L1586.7,223.2 V296.8 L1530.5,257.7 Z" fill="url(#cgf)" stroke="#8c8c8c" stroke-width="1.1" stroke-linejoin="round"/>
<path d="M1586.7,223.2 L1650.3,189 L1645.2,259.7 L1586.7,296.8 Z" fill="url(#cgf)" stroke="#8c8c8c" stroke-width="1.1" stroke-linejoin="round"/>
<path d="M1586.7,211 L1597,217.5 V230 L1586.7,236 L1576,230 V217.5 Z" fill="#e6e8ee" opacity=".8"/>
<text transform="matrix(0.86,0.42,-0.75,0.40,1570,180)" font-family="Liberation Sans, sans-serif" font-size="17" font-weight="bold" fill="#a6a6a6" textLength="33">TOP</text>
<text transform="matrix(0.80,0.50,0.03,1,1535,238)" font-family="Liberation Sans, sans-serif" font-size="18" font-weight="bold" fill="#a6a6a6" textLength="53">FRONT</text>
<text transform="matrix(0.84,-0.50,-0.03,1,1598,262)" font-family="Liberation Sans, sans-serif" font-size="18" font-weight="bold" fill="#a6a6a6" textLength="47">RIGHT</text>
<path d="M1521.7,177.6 L1529.7,258.3" stroke="#5c5cf2" stroke-width="3.2"/>
<path d="M1529.7,258.3 L1596.7,306.8" stroke="#ec7272" stroke-width="3.2"/>
<text x="1511.5" y="171" font-family="Liberation Sans, sans-serif" font-size="25" font-weight="bold" fill="#8484ff" textLength="14.5" lengthAdjust="spacingAndGlyphs">Z</text>
<text x="1599.5" y="325" font-family="Liberation Sans, sans-serif" font-size="25" font-weight="bold" fill="#ff7676" textLength="14.5" lengthAdjust="spacingAndGlyphs">X</text>
</g>
</svg>


<!-- panel -->
<div id="panel" class="abs">
<div class="abs" id="phead" style="left:0;top:0;width:484px;height:48px;background:linear-gradient(#ececec,#e2e2e2);border-top:2px solid #cdcdcd;border-bottom:1px solid #c0c0c0;box-sizing:border-box;"></div>
<div class="prow" id="ptitle" style="left:86px;top:11px;font-size:23px;color:#505050;"><span id="pt0">ADAPTIVE : </span><span id="pt1">3D ADAPTIVE1</span></div>
<svg class="abs" style="left:467px;top:20px" width="16" height="14" viewBox="0 0 16 14"><path d="M1 1 L8 7 L1 13 Z M8 1 L15 7 L8 13 Z" fill="#333"/><rect x="14" y="1" width="2" height="12" fill="#333"/></svg>
<!-- tab strip -->
<div class="abs" id="tabs" style="left:0;top:48px;width:484px;height:59px;background:#e9e9e9;border-bottom:2px solid #bdbdbd;box-sizing:border-box;"></div>
<div class="abs" style="left:0;top:48px;width:58px;height:59px;background:#e8e8e8;border-right:2px solid #bdbdbd;border-bottom:2px solid #bdbdbd;box-sizing:border-box;"></div>
<div class="abs" style="left:58px;top:48px;width:58px;height:59px;background:#f0f0f0;"></div>
<div class="abs" style="left:116px;top:48px;width:58px;height:59px;background:#e8e8e8;border-left:2px solid #bdbdbd;border-right:2px solid #bdbdbd;border-bottom:2px solid #bdbdbd;box-sizing:border-box;"></div>
<svg class="abs" style="left:0;top:50px" width="180" height="55" viewBox="1196 383 180 55">
<path d="M1220.7,395 H1231.8 V424.5 L1226.2,429 L1220.7,424.5 Z" fill="#f4f4f4" stroke="#222" stroke-width="1.2"/>
<path d="M1221,422 L1231.5,409 V416 L1223.5,426.5 Z" fill="#444"/>
<path d="M1270.3,412 H1286.4 V428.6 H1270.3 Z" fill="#cfd3d8" stroke="#4a5058" stroke-width="1.1"/>
<path d="M1270.3,412 L1278,404.5 H1293.8 L1286.4,412 Z" fill="#e6e8ea" stroke="#4a5058" stroke-width="1.1"/>
<path d="M1286.4,412 L1293.8,404.5 V420.9 L1286.4,428.6 Z" fill="#a9aeb6" stroke="#4a5058" stroke-width="1.1"/>
<path d="M1289.5,405 H1299.2 V412.5 L1295,417.3 H1289.5 Z" fill="#8fc0e4" stroke="#2d7fc0" stroke-width="1.1"/>
<path d="M1328.4,412 H1346 V428.6 H1328.4 Z" fill="#cfd3d8" stroke="#4a5058" stroke-width="1.1"/>
<path d="M1328.4,412 L1336,404.5 H1352.8 L1346,412 Z" fill="#e6e8ea" stroke="#4a5058" stroke-width="1.1"/>
<path d="M1346,412 L1352.8,404.5 V421.5 L1346,428.6 Z" fill="#a9aeb6" stroke="#4a5058" stroke-width="1.1"/>
</svg>

<svg class="abs" style="left:18px;top:133px" width="18" height="12" viewBox="0 0 18 12"><path d="M0 0 H18 L9 12 Z" fill="#333"/></svg>
<div class="prow" id="p_geo" style="left:48px;top:124px;font-weight:bold;font-size:23px;color:#383838">Geometry</div>
<div class="prow" id="p_cm" style="left:24px;top:184px">Contour Mode</div>
<div class="prow" id="p_ps" style="left:24px;top:244px">Pocket Selection</div>
<div class="prow" id="p_em" style="left:24px;top:304px">Extension Method</div>
<div class="abs" style="left:240px;top:293px;width:193px;height:52px;background:#fff;border:2px solid #cfcfcf;box-sizing:border-box;"></div>
<svg class="abs" style="left:247px;top:302px" width="34" height="34" viewBox="0 0 34 34"><rect x="1" y="1" width="22" height="22" fill="#f4f4f4" stroke="#555" stroke-width="1.6"/><rect x="5.5" y="6.5" width="26" height="26" fill="#9ccbee" fill-opacity=".85" stroke="#1e8fdc" stroke-width="1.8"/><circle cx="17" cy="17" r="6.5" fill="#e8f2fa" stroke="#444" stroke-width="1.6"/><path d="M21 22 L31 32" stroke="#1e8fdc" stroke-width="1.8"/></svg>
<div class="prow" id="p_tan" style="left:289px;top:304px">Tangent</div>
<svg class="abs" style="left:408px;top:315px" width="13" height="9" viewBox="0 0 13 9"><path d="M0 0 H13 L6.5 9 Z" fill="#333"/></svg>
<div class="pline" style="left:2px;top:359px"></div>
<div class="abs cb" style="left:21px;top:385px"></div>
<div class="prow" id="p_sc" style="left:60px;top:384px;font-weight:bold;color:#383838">Stock Contours</div>
<div class="pline" style="left:2px;top:439px"></div>
<div class="abs cb" style="left:21px;top:465px"></div>
<div class="prow" id="p_rm" style="left:60px;top:464px;font-weight:bold;color:#383838">Rest Machining</div>
<div class="pline" style="left:2px;top:519px"></div>
<svg class="abs" style="left:18px;top:543px" width="32" height="32" viewBox="0 0 32 32"><circle cx="16" cy="16" r="16" fill="#0d96d8"/><path d="M12.5 13 V24 M7 18.5 H18" stroke="#fff" stroke-width="3.2"/><path d="M21.5 8.5 V15.5 M18 12 H25" stroke="#fff" stroke-width="2.2"/><rect x="15" y="6.5" width="2.4" height="2.4" fill="#fff"/></svg>
<div class="prow" id="p_wt" style="left:68px;top:544px;color:#4c4c4c">Wrap Toolpath</div>
<div class="pline" style="left:2px;top:599px"></div>
<svg class="abs" style="left:18px;top:623px" width="32" height="32" viewBox="0 0 32 32"><circle cx="16" cy="16" r="16" fill="#0d96d8"/><path d="M12.5 13 V24 M7 18.5 H18" stroke="#fff" stroke-width="3.2"/><path d="M21.5 8.5 V15.5 M18 12 H25" stroke="#fff" stroke-width="2.2"/><rect x="15" y="6.5" width="2.4" height="2.4" fill="#fff"/></svg>
<div class="prow" id="p_to" style="left:68px;top:624px;color:#4c4c4c">Tool Orientation</div>
<div class="abs" style="left:0;top:671px;width:484px;height:2px;background:#c9c9c9"></div>
<svg class="abs" style="left:15px;top:696px" width="26" height="26" viewBox="0 0 26 26"><circle cx="13" cy="13" r="12.5" fill="#000"/><rect x="11" y="5" width="4.5" height="4" fill="#fff"/><path d="M9 11 H15.5 V19 H18 V21.5 H8.5 V19 H11 V13.5 H9 Z" fill="#fff"/></svg>
<div class="abs btn" style="left:234px;top:689px;width:120px;height:38px;"><span id="p_ok" style="left:41px">OK</span></div>
<div class="abs btn" style="left:366px;top:689px;width:130px;height:38px;"><span id="p_ca" style="left:20px">Cancel</span></div>

</div>

<!-- tooltip -->
<div id="tip" class="abs">
<p id="t1" style="top:56px">Specifies which object types can be selected.</p>
<p id="t2" style="top:120px">Use Select All to include or exclude all object</p>
<p id="t3" style="top:152px">types. Check only specific types to limit</p>
<p id="t4" style="top:184px">selection to those types. Check Select</p>
<p id="t5" style="top:216px">Through to enable selection of hidden objects</p>
<p id="t6" style="top:248px">during Window or Freeform selection.</p>

</div>

<!-- menus -->
<div class="menu" id="m1" style="left:1011px;top:100px;width:353px;height:311px;">
<div class="mi" style="top:5px"><span class="t" id="mt1">Select</span></div>
<div class="msep" style="top:47px"></div>
<div class="mi" style="top:49px"><span class="t" id="mt2">Window Selection</span><span class="k">1</span></div>
<div class="mi" style="top:91px"><span class="t" id="mt3">Freeform Selection</span><span class="k">2</span></div>
<div class="mi" style="top:133px"><span class="t" id="mt4">Paint Selection</span><span class="k">3</span></div>
<div class="msep" style="top:175px"></div>
<div class="mi" style="top:177px"><span class="t" id="mt5">Selection Tools</span><b class="arr"></b></div>
<div class="msep" style="top:219px"></div>
<div class="mi" style="top:221px"><span class="t" id="mt6">Selection Priority</span><b class="arr"></b></div>
<div class="mi" style="top:263px;background:#d4d4d4"><span class="t" id="mt7">Selection Filters</span><b class="arr"></b></div>
<svg class="abs" style="left:0;top:0" width="60" height="310" viewBox="1012.5 101.5 60 310">
<rect x="1023.4" y="111" width="26.6" height="20" fill="none" stroke="#10b04a" stroke-width="1.8" stroke-dasharray="4.2 2.6"/>
<path d="M0,0 V13.5 L3,10.6 L5.2,16 L7.6,15 L5.5,9.8 H9.6 Z" transform="translate(1043.6,123.6) scale(1.05)" fill="#ccc" stroke="#444" stroke-width="1.3" stroke-dasharray="2 1"/>
<rect x="1023" y="154.6" width="27" height="21" fill="none" stroke="#1aae48" stroke-width="1.15" stroke-dasharray="4 2.4"/>
<path d="M0,0 V13.5 L3,10.6 L5.2,16 L7.6,15 L5.5,9.8 H9.6 Z" transform="translate(1044.2,169.6)" fill="#fff" stroke="#222" stroke-width="1.1"/>
<ellipse cx="1036.6" cy="209.4" rx="14" ry="12.4" transform="rotate(-28 1036.6 209.4)" fill="none" stroke="#1aae48" stroke-width="1.15" stroke-dasharray="4 2.6"/>
<path d="M0,0 V13.5 L3,10.6 L5.2,16 L7.6,15 L5.5,9.8 H9.6 Z" transform="translate(1044.2,211.6)" fill="#fff" stroke="#222" stroke-width="1.1"/>
<path d="M1028.3,240.6 H1046.4 L1052.6,248.3 L1034,249.8 Z" fill="#5cc87a" stroke="#3fae60" stroke-width=".8"/>
<path d="M1028.3,240.6 Q1022.3,241.5 1022.3,248 V258.6 L1031.2,265.6 V255 Q1031.2,250.5 1034,249.8 Z" fill="#fafafa" stroke="#777" stroke-width="1"/>
<path d="M1022.5,251 L1031,257" stroke="#999" stroke-width=".8"/>
<path d="M1037.4,240.8 L1043.6,249" stroke="#3fae60" stroke-width=".8"/>
<path d="M1034,249.8 L1052.6,248.3 V252 " fill="none" stroke="#777" stroke-width="1"/>
<path d="M1046,260.5 L1053.2,254.2" stroke="#808080" stroke-width="2.6"/>
<path d="M1036.5,266.5 Q1039,259.5 1044.5,259 Q1047.5,261 1046,264 Q1042,267.5 1036.5,266.5 Z" fill="#a85a1e"/>
<path d="M0,0 V20.5 L4.6,16.2 L8,24 L11.4,22.6 L8.2,15 H14.4 Z" transform="translate(1030.6,369.4) scale(1.14)" fill="#fff" stroke="#222" stroke-width="1.2"/>
</svg>

</div>
<div class="menu" id="m2" style="left:1355px;top:358px;width:293px;height:266px;">
<div class="ck" style="top:8.3px"><svg width="28" height="28" viewBox="0 0 28 28"><path d="M6.5 14.5 L11.5 20.5 L21 7" fill="none" stroke="#fff" stroke-width="3.4" stroke-linecap="round" stroke-linejoin="round"/></svg></div><div class="st" id="s1" style="top:7.3px">Select Through</div>
<div class="ck" style="top:46.5px"><svg width="28" height="28" viewBox="0 0 28 28"><path d="M6.5 14.5 L11.5 20.5 L21 7" fill="none" stroke="#fff" stroke-width="3.4" stroke-linecap="round" stroke-linejoin="round"/></svg></div><div class="st" id="s2" style="top:45.5px">Select All</div>
<div class="ck" style="top:82.3px"><svg width="28" height="28" viewBox="0 0 28 28"><path d="M6.5 14.5 L11.5 20.5 L21 7" fill="none" stroke="#fff" stroke-width="3.4" stroke-linecap="round" stroke-linejoin="round"/></svg></div><div class="st" id="s3" style="top:81.3px">Body Edges</div>
<div class="ck" style="top:118.5px"><svg width="28" height="28" viewBox="0 0 28 28"><path d="M6.5 14.5 L11.5 20.5 L21 7" fill="none" stroke="#fff" stroke-width="3.4" stroke-linecap="round" stroke-linejoin="round"/></svg></div><div class="st" id="s4" style="top:117.5px">Body Faces</div>
<div class="ck" style="top:154.5px"><svg width="28" height="28" viewBox="0 0 28 28"><path d="M6.5 14.5 L11.5 20.5 L21 7" fill="none" stroke="#fff" stroke-width="3.4" stroke-linecap="round" stroke-linejoin="round"/></svg></div><div class="st" id="s5" style="top:153.5px">Sketch Curves</div>
<div class="ck" style="top:190.5px"><svg width="28" height="28" viewBox="0 0 28 28"><path d="M6.5 14.5 L11.5 20.5 L21 7" fill="none" stroke="#fff" stroke-width="3.4" stroke-linecap="round" stroke-linejoin="round"/></svg></div><div class="st" id="s6" style="top:189.5px">Sketches</div>
<div class="ck" style="top:226.5px"><svg width="28" height="28" viewBox="0 0 28 28"><path d="M6.5 14.5 L11.5 20.5 L21 7" fill="none" stroke="#fff" stroke-width="3.4" stroke-linecap="round" stroke-linejoin="round"/></svg></div><div class="st" id="s7" style="top:225.5px">Text Selection</div>
<div class="msep" style="top:40.5px;left:7px;right:8px"></div>

</div>

</body>
</html>
